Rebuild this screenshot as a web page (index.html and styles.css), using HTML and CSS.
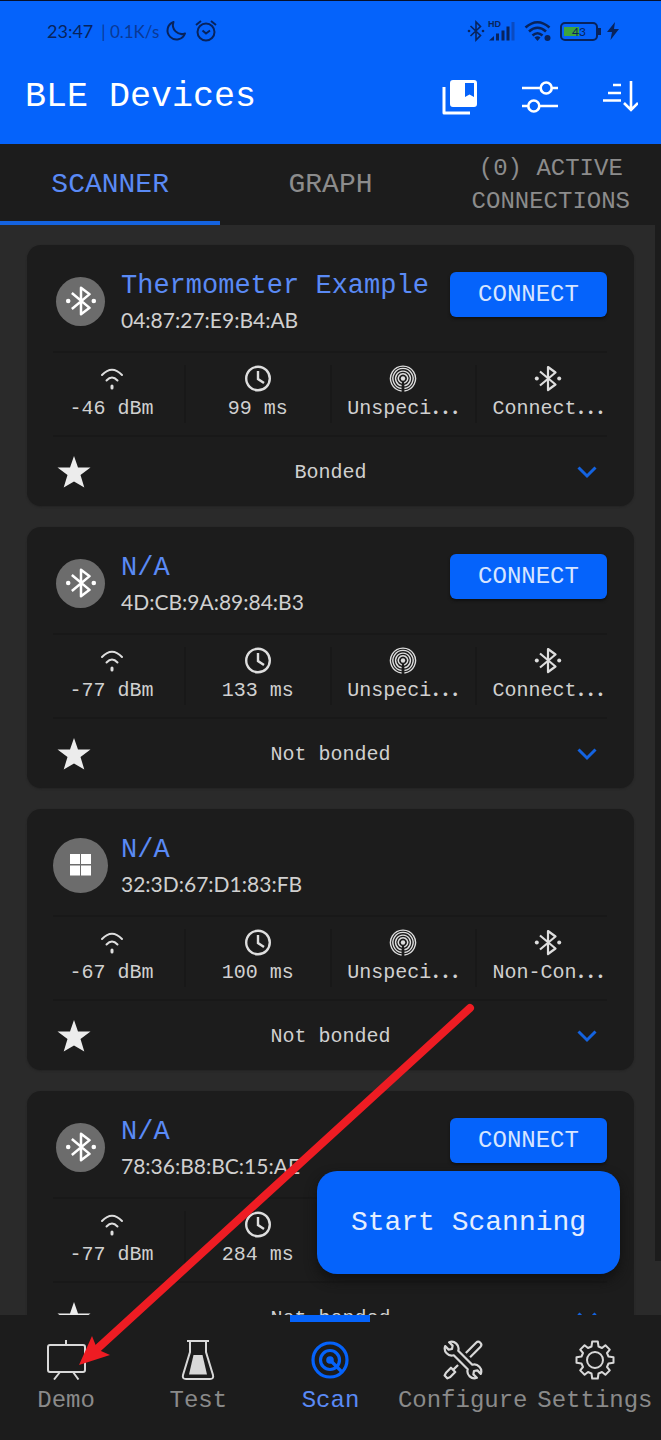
FILE: index.html
```html
<!DOCTYPE html>
<html lang="en">
<head>
<meta charset="utf-8">
<meta name="viewport" content="width=device-width, initial-scale=1">
<title>BLE Devices</title>
<link rel="stylesheet" href="styles.css">
</head>
<body>
<svg class="sprite" aria-hidden="true">
  <symbol id="bt" viewBox="0 0 28 26"><path d="M6 6L21.500 19L14 24.500V1.500L21.500 7L6 20" fill="none" stroke="currentColor" stroke-width="2.200" stroke-linejoin="round"/><circle cx="2.800" cy="13" r="2" fill="currentColor"/><circle cx="25.200" cy="13" r="2" fill="currentColor"/></symbol>
  <symbol id="rssi" viewBox="0 0 28 26"><g fill="none" stroke="currentColor" stroke-width="2" stroke-linecap="round"><path d="M4 9.500Q14 -1 24 9.500"/><path d="M8.500 15Q14 9 19.500 15"/></g><rect x="12.500" y="19" width="3" height="5" rx="1.500" fill="currentColor"/></symbol>
  <symbol id="clock" viewBox="0 0 28 26"><g fill="none" stroke="currentColor" stroke-width="2.400"><circle cx="14" cy="13" r="11.800"/><path d="M14 5.500V13.500L20 17.500"/></g></symbol>
  <symbol id="antenna" viewBox="0 0 28 26"><g fill="none" stroke="currentColor" stroke-width="1.400"><path d="M12.800 17.500A4.700 4.700 0 1 1 15.200 17.500"/><path d="M12.600 20.300A7.400 7.400 0 1 1 15.400 20.300"/><path d="M12.600 23A10.100 10.100 0 1 1 15.400 23"/><path d="M12.600 25.500A12.500 12.500 0 1 1 15.400 25.500"/></g><circle cx="14" cy="13" r="2.200" fill="currentColor"/></symbol>
  <symbol id="star" viewBox="0 0 34 34"><path d="M17 1L21 12.500H33.500L23.500 20L27.300 32.500L17 26.500L6.700 32.500L10.500 20L.5 12.500H13Z" fill="currentColor"/></symbol>
  <symbol id="chevron" viewBox="0 0 22 14"><path d="M2.500 2.500L11 11L19.500 2.500" fill="none" stroke="currentColor" stroke-width="3"/></symbol>
</svg>

<div class="app">
  <header class="appbar">
    <div class="status">
      <div class="status-side">
        <span class="time">23:47</span><span class="rate">| 0.1K/s</span>
        <svg width="22" height="22" viewBox="0 0 22 22"><path d="M8.500 2A9 9 0 1 0 20 13.500A9 9 0 0 1 8.500 2Z" fill="none" stroke="currentColor" stroke-width="2" stroke-linejoin="round"/></svg>
        <svg class="alarm" width="22" height="22" viewBox="0 0 22 22"><g fill="none" stroke="currentColor" stroke-width="2"><circle cx="11" cy="12" r="8.500"/><path d="M7.500 10.500L11 13.500L15 10.500M1 5L6 1M21 5L16 1"/></g></svg>
      </div>
      <div class="status-side">
        <svg width="18" height="22" viewBox="0 0 18 22"><path d="M3.500 6L13.500 15.500L9 20V2L13.500 6.500L3.500 16" fill="none" stroke="currentColor" stroke-width="1.600"/><circle cx="2" cy="11" r="1.300" fill="currentColor"/><circle cx="16" cy="11" r="1.300" fill="currentColor"/></svg>
        <div class="signal"><span class="hd">HD</span><svg width="27" height="22" viewBox="0 0 27 22"><path fill="currentColor" d="M1 20.500L6 16V20.500ZM8 13.500H11V20.500H8ZM13.500 10.500H16.500V20.500H13.500ZM18.500 6.500H21.500V20.500H18.500Z"/><path fill="#0b4bc0" d="M23.500 2H26.500V20.500H23.500Z"/></svg></div>
        <svg class="wifi" width="28" height="22" viewBox="0 0 28 22"><g fill="none" stroke="currentColor" stroke-width="2.600"><path d="M1.500 7.500Q13.500 -3 25.500 7.500"/><path d="M5 11.500Q13.500 4 22 11.500"/><path d="M8.500 15.500Q13.500 11 18.500 15.500"/></g><path d="M10.500 17.500Q13.500 15 16.500 17.500L13.500 21Z" fill="currentColor"/><circle cx="23.500" cy="18" r="3" fill="currentColor"/></svg>
        <div class="battery"><span>43</span></div>
        <svg width="12" height="18" viewBox="0 0 12 18"><path d="M8 0L0 10H5L3.500 18L12 7H7Z" fill="currentColor"/></svg>
      </div>
    </div>
    <div class="toolbar">
      <h1>BLE Devices</h1>
      <div class="actions">
        <button type="button" aria-label="Saved devices"><svg width="36" height="36" viewBox="0 0 36 36"><path d="M2 8V34H28" fill="none" stroke="currentColor" stroke-width="3" stroke-linejoin="round"/><path fill="currentColor" fill-rule="evenodd" d="M11 1H32Q35 1 35 4V25Q35 28 32 28H11Q8 28 8 25V4Q8 1 11 1ZM23 4V18L27.500 15.500L32 18V4Z"/></svg></button>
        <button type="button" aria-label="Filter"><svg width="36" height="36" viewBox="0 0 36 36"><g fill="none" stroke="currentColor" stroke-width="2.600"><path d="M0 9H18.500M30 9H36M0 27H6M17.500 27H36"/><circle cx="24.200" cy="9" r="5.500"/><circle cx="11.800" cy="27" r="5.500"/></g></svg></button>
        <button type="button" aria-label="Sort"><svg width="36" height="36" viewBox="0 0 36 36"><g fill="none" stroke="currentColor" stroke-width="2.600"><path d="M11 6H19M6 14H19M1 21.500H19M29 2V31M22 24L29 31L36 24"/></g></svg></button>
      </div>
    </div>
  </header>

  <div class="tabs" role="tablist">
    <button type="button" role="tab" aria-selected="true" class="tab active">SCANNER</button>
    <button type="button" role="tab" aria-selected="false" class="tab">GRAPH</button>
    <button type="button" role="tab" aria-selected="false" class="tab small">(0) ACTIVE CONNECTIONS</button>
  </div>

  <div class="content">
    <main class="list">
      <article class="card">
        <div class="head">
          <div class="avatar"><svg width="32" height="32"><use href="#bt"/></svg></div>
          <div class="ident"><h2>Thermometer Example</h2><p>04:87:27:E9:B4:AB</p></div>
          <button type="button" class="connect">CONNECT</button>
        </div>
        <div class="stats">
          <div><svg><use href="#rssi"/></svg><span>-46 dBm</span></div>
          <div><svg><use href="#clock"/></svg><span>99 ms</span></div>
          <div><svg><use href="#antenna"/></svg><span>Unspeci<i>⋯</i></span></div>
          <div><svg><use href="#bt"/></svg><span>Connect<i>⋯</i></span></div>
        </div>
        <div class="foot">
          <button type="button" aria-label="Favorite"><svg width="34" height="34"><use href="#star"/></svg></button>
          <span>Bonded</span>
          <button type="button" class="more" aria-label="Expand"><svg width="22" height="14"><use href="#chevron"/></svg></button>
        </div>
      </article>

      <article class="card">
        <div class="head">
          <div class="avatar"><svg width="32" height="32"><use href="#bt"/></svg></div>
          <div class="ident"><h2>N/A</h2><p>4D:CB:9A:89:84:B3</p></div>
          <button type="button" class="connect">CONNECT</button>
        </div>
        <div class="stats">
          <div><svg><use href="#rssi"/></svg><span>-77 dBm</span></div>
          <div><svg><use href="#clock"/></svg><span>133 ms</span></div>
          <div><svg><use href="#antenna"/></svg><span>Unspeci<i>⋯</i></span></div>
          <div><svg><use href="#bt"/></svg><span>Connect<i>⋯</i></span></div>
        </div>
        <div class="foot">
          <button type="button" aria-label="Favorite"><svg width="34" height="34"><use href="#star"/></svg></button>
          <span>Not bonded</span>
          <button type="button" class="more" aria-label="Expand"><svg width="22" height="14"><use href="#chevron"/></svg></button>
        </div>
      </article>

      <article class="card">
        <div class="head">
          <div class="avatar large"><svg width="22" height="22" viewBox="0 0 22 22"><path d="M0 0H10V10H0ZM11 0H21V10H11ZM0 11.500H10V21.500H0ZM11 11.500H21V21.500H11Z" fill="currentColor"/></svg></div>
          <div class="ident"><h2>N/A</h2><p>32:3D:67:D1:83:FB</p></div>
        </div>
        <div class="stats">
          <div><svg><use href="#rssi"/></svg><span>-67 dBm</span></div>
          <div><svg><use href="#clock"/></svg><span>100 ms</span></div>
          <div><svg><use href="#antenna"/></svg><span>Unspeci<i>⋯</i></span></div>
          <div><svg><use href="#bt"/></svg><span>Non-Con<i>⋯</i></span></div>
        </div>
        <div class="foot">
          <button type="button" aria-label="Favorite"><svg width="34" height="34"><use href="#star"/></svg></button>
          <span>Not bonded</span>
          <button type="button" class="more" aria-label="Expand"><svg width="22" height="14"><use href="#chevron"/></svg></button>
        </div>
      </article>

      <article class="card">
        <div class="head">
          <div class="avatar"><svg width="32" height="32"><use href="#bt"/></svg></div>
          <div class="ident"><h2>N/A</h2><p>78:36:B8:BC:15:AE</p></div>
          <button type="button" class="connect">CONNECT</button>
        </div>
        <div class="stats">
          <div><svg><use href="#rssi"/></svg><span>-77 dBm</span></div>
          <div><svg><use href="#clock"/></svg><span>284 ms</span></div>
          <div></div>
          <div></div>
        </div>
        <div class="foot">
          <button type="button" aria-label="Favorite"><svg width="34" height="34"><use href="#star"/></svg></button>
          <span>Not bonded</span>
          <button type="button" class="more" aria-label="Expand"><svg width="22" height="14"><use href="#chevron"/></svg></button>
        </div>
      </article>
    </main>
    <div class="scrollbar"></div>
    <button type="button" class="fab">Start Scanning</button>
  </div>

  <nav class="bottom">
    <a href="#demo"><svg viewBox="-20 -20 40 40"><g fill="none" stroke="currentColor" stroke-width="2"><rect x="-18" y="-15" width="37" height="27" rx="2"/><path d="M0 -20V-15M-6 12L-12 19.500M7 12L12.500 19.500"/></g></svg><span>Demo</span></a>
    <a href="#test"><svg viewBox="-20 -20 40 40"><path d="M-11 -19H11M-8 -19V-8L-15 15Q-16 19 -12 19H12Q16 19 15 15L8 -8V-19" fill="none" stroke="currentColor" stroke-width="2"/><path d="M-4.500 -5H4.500L9 14.500H-9Z" fill="currentColor"/></svg><span>Test</span></a>
    <a href="#scan" class="active" aria-current="page"><svg viewBox="-20 -20 40 40"><g fill="none" stroke="currentColor" stroke-width="3.200"><circle r="17"/><circle r="9.500"/><path d="M1 1L12.500 12.500"/></g><circle r="3.800" fill="currentColor"/></svg><span>Scan</span></a>
    <a href="#configure"><svg viewBox="-20 -20 40 40"><g fill="none" stroke="currentColor" stroke-width="2.200" stroke-linejoin="round"><path transform="rotate(45)" d="M-9.900 -3.200H9.900A7 7 0 0 1 22.400 -2.800H17.500L15.500 0L17.500 2.800H22.400A7 7 0 0 1 9.900 3.200H-9.900A7 7 0 0 1 -22.400 2.800H-17.500L-15.500 0L-17.500 -2.800H-22.400A7 7 0 0 1 -9.900 -3.200Z"/><path transform="rotate(-45)" d="M7 -3H21.500A3 3 0 0 1 21.500 3H7M-7 0H-14M-14 -3H-21L-24 -2V2L-21 3H-14Z"/></g></svg><span>Configure</span></a>
    <a href="#settings"><svg viewBox="-20 -20 40 40"><g fill="none" stroke="currentColor" stroke-width="2" stroke-linejoin="round"><circle r="8"/><path d="M-3.500 -13.500L-2.800 -18.500H2.800L3.500 -13.500L7 -12L10.400 -14.800L14.800 -10.400L12 -7L13.500 -3.500L18.500 -2.800V2.800L13.500 3.500L12 7L14.800 10.400L10.400 14.800L7 12L3.500 13.500L2.800 18.500H-2.800L-3.500 13.500L-7 12L-10.400 14.800L-14.800 10.400L-12 7L-13.500 3.500L-18.500 2.800V-2.800L-13.500 -3.500L-12 -7L-14.800 -10.400L-10.400 -14.800L-7 -12Z"/></g></svg><span>Settings</span></a>
  </nav>

  <svg class="pointer" width="404" height="372" viewBox="72 1000 404 372" aria-hidden="true"><path d="M470 1008L97 1349" stroke="#ee1c23" stroke-width="8" stroke-linecap="round"/><path d="M79 1365L92 1336L96 1346L101 1351L110 1355Z" fill="#ee1c23"/></svg>
</div>
</body>
</html>
```

FILE: styles.css
```css
* { box-sizing: border-box; }

body {
  margin: 0;
  background: #1c1c1c;
  color: #d0d0d0;
  font-family: "Liberation Mono", "Noto Sans CJK SC", monospace;
}

button {
  border: 0;
  padding: 0;
  background: none;
  color: inherit;
  font: inherit;
}

h1, h2, p { margin: 0; font-weight: 400; }
svg { display: block; flex: none; }
.sprite { position: absolute; width: 0; height: 0; }

.app {
  position: relative;
  display: flex;
  flex-direction: column;
  height: 100vh;
  overflow: hidden;
}

.appbar {
  background: #0563fb;
  border-top: 1px solid #06102a;
  padding-bottom: 11px;
}

.status {
  display: flex;
  justify-content: space-between;
  align-items: center;
  height: 60px;
  padding: 0 42px 0 47px;
  color: #08235c;
  font-family: Lato, sans-serif;
}
.status-side { display: flex; align-items: center; }
.time { font-size: 18px; }
.rate { font-size: 17px; color: #0a3996; margin: 0 6px 0 8px; }
.alarm { margin-left: 8px; }
.signal { position: relative; margin-left: 3px; }
.hd {
  position: absolute;
  left: 0;
  top: 0;
  font: 700 9px/8px "Liberation Sans", sans-serif;
}
.wifi { margin: 0 8px 0 9px; }
.battery {
  position: relative;
  width: 38px;
  height: 19px;
  border: 2px solid currentColor;
  border-radius: 5px;
  margin-right: 9px;
  background: linear-gradient(90deg, #3fa53c 15px, transparent 15px) 2px 3px / 30px 9px no-repeat;
  font-size: 12px;
  line-height: 15px;
  text-align: center;
}
.battery::after {
  content: "";
  position: absolute;
  right: -5px;
  top: 4px;
  width: 3px;
  height: 7px;
  background: currentColor;
}

.toolbar {
  display: flex;
  justify-content: space-between;
  align-items: center;
  height: 72px;
  padding: 0 23px 0 25px;
  color: #fff;
}
.toolbar h1 { font-size: 35px; line-height: 40px; }
.actions { display: flex; gap: 44px; }

.tabs {
  display: grid;
  grid-template-columns: repeat(3, 1fr);
  height: 81px;
  flex: none;
}
.tab {
  padding-top: 4px;
  border-bottom: 4px solid transparent;
  color: #8c8c8c;
  font-size: 28px;
}
.tab.active { color: #5a8af5; border-color: #1463e0; }
.tab.small { font-size: 24px; line-height: 33px; }

.content {
  position: relative;
  flex: 1;
  min-height: 0;
  overflow: hidden;
  background: #2a2a2a;
}
.list {
  display: flex;
  flex-direction: column;
  gap: 21px;
  padding: 20px 27px;
}
.scrollbar {
  position: absolute;
  top: 0;
  right: 0;
  width: 6px;
  height: 95%;
  background: #1c1c1c;
}

.card {
  background: #1c1c1c;
  border-radius: 14px;
  box-shadow: 0 1px 2px #222;
}
.head {
  display: flex;
  align-items: center;
  height: 106px;
  margin: 0 27px 0 26px;
  padding-top: 6px;
}
.avatar {
  display: grid;
  place-items: center;
  width: 49px;
  height: 49px;
  margin: 0 3px;
  border-radius: 50%;
  background: #6c6c6c;
  color: #fff;
}
.avatar.large { width: 55px; height: 55px; margin: 0; }
.ident { flex: 1; min-width: 0; padding: 4px 0 0 13px; }
.ident h2 {
  color: #5a8af5;
  font-size: 27px;
  line-height: 34px;
  white-space: nowrap;
}
.ident p {
  font-family: Lato, sans-serif;
  font-size: 21px;
  line-height: 34px;
}
.connect {
  width: 157px;
  height: 45px;
  margin-bottom: 14px;
  border-radius: 6px;
  background: #0563fb;
  color: #d6e5ff;
  font-size: 24px;
  box-shadow: 0 2px 3px #111;
}

.stats {
  position: relative;
  display: grid;
  grid-template-columns: repeat(4, 1fr);
  height: 86px;
  padding: 14px 14px 14px 12px;
}
.stats::before,
.stats::after {
  content: "";
  position: absolute;
  left: 26px;
  right: 27px;
  height: 2px;
  background: #181818;
}
.stats::before { top: 0; }
.stats::after { bottom: 0; }
.stats div {
  display: flex;
  flex-direction: column;
  align-items: center;
  gap: 4px;
  color: #dedede;
}
.stats div + div { border-left: 2px solid #181818; }
.stats svg { width: 28px; height: 27px; }
.stats span {
  color: #d0d0d0;
  font-size: 20px;
  line-height: 26px;
  white-space: nowrap;
}
.stats i { font: normal 26px/1px "Noto Sans CJK SC", sans-serif; }

.foot {
  display: flex;
  align-items: center;
  justify-content: space-between;
  height: 69px;
  padding: 0 30px;
}
.foot button { width: 34px; color: #ececec; }
.foot .more { color: #1463e0; }
.more svg { margin: auto; }
.foot span { padding-top: 2px; font-size: 20px; }

.fab {
  position: absolute;
  right: 41px;
  bottom: 41px;
  width: 303px;
  height: 103px;
  border-radius: 20px;
  background: #0563fb;
  color: #e4eeff;
  font-size: 28px;
  box-shadow: 0 6px 12px #111;
}

.bottom {
  display: grid;
  grid-template-columns: repeat(5, 1fr);
  height: 125px;
  flex: none;
  background: #1c1c1c;
}
.bottom a {
  position: relative;
  display: flex;
  flex-direction: column;
  align-items: center;
  gap: 4px;
  padding-top: 25px;
  color: #d8d8d8;
  text-decoration: none;
}
.bottom svg { width: 40px; height: 40px; }
.bottom span { color: #8a8a8a; font-size: 24px; line-height: 34px; }
.bottom .active { color: #0563fb; }
.bottom .active span { color: #5a8af5; }
.bottom .active::before {
  content: "";
  position: absolute;
  top: 0;
  width: 80px;
  height: 7px;
  background: #0563fb;
}

.pointer { position: absolute; left: 72px; bottom: 68px; pointer-events: none; }
```
